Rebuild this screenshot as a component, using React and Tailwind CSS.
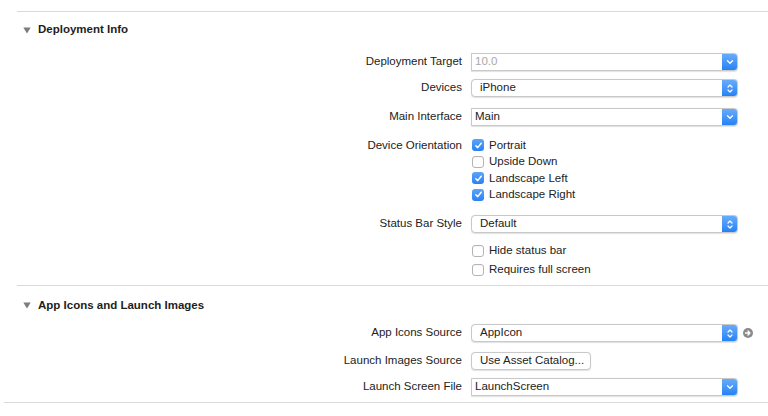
import React from "react";

const font = { fontFamily: '"Liberation Sans", Arial, sans-serif' };

function ChevDown() {
  return (
    <svg width="8" height="6" viewBox="0 0 8 6">
      <path d="M1.5 1.8 L4 4.2 L6.5 1.8" fill="none" stroke="white" strokeWidth="1.3" strokeLinecap="round" strokeLinejoin="round" />
    </svg>
  );
}

function ChevUpDown() {
  return (
    <svg width="8" height="11" viewBox="0 0 8 11">
      <path d="M2 4 L4 2 L6 4" fill="none" stroke="white" strokeWidth="1.2" strokeLinecap="round" strokeLinejoin="round" />
      <path d="M2 7 L4 9 L6 7" fill="none" stroke="white" strokeWidth="1.2" strokeLinecap="round" strokeLinejoin="round" />
    </svg>
  );
}

function Popup({ text, updown, combo, disabled }) {
  return (
    <div
      className={
        "w-[267px] h-[18px] flex bg-white overflow-hidden border border-[#c9c9c9] shadow-[0_0.5px_1px_rgba(0,0,0,0.12)] " +
        (combo ? "rounded-r-[4px]" : "rounded-[4px]")
      }
    >
      <div
        className={
          "flex-1 flex items-center text-[11.5px] leading-none " +
          (combo ? "pl-[3px] " : "pl-[8px] ") +
          (disabled ? "text-[#a8a8a8]" : "text-[#222]")
        }
      >
        {text}
      </div>
      <div className="w-[16px] -my-px -mr-px rounded-r-[4px] bg-linear-to-b from-[#6aaefa] to-[#1d7ff5] flex items-center justify-center">
        {updown ? <ChevUpDown /> : <ChevDown />}
      </div>
    </div>
  );
}

function Checkbox({ checked }) {
  if (checked) {
    return (
      <div className="w-[12px] h-[12px] rounded-[3px] bg-linear-to-b from-[#5aa5f8] to-[#2a80f3] flex items-center justify-center">
        <svg width="9" height="9" viewBox="0 0 9 9">
          <path d="M1.8 4.8 L3.7 6.6 L7.2 2.2" fill="none" stroke="white" strokeWidth="1.5" strokeLinecap="round" strokeLinejoin="round" />
        </svg>
      </div>
    );
  }
  return <div className="w-[12px] h-[12px] rounded-[3px] border border-[#b4b4b4] bg-white shadow-[inset_0_0.5px_1px_rgba(0,0,0,0.08)]" />;
}

function Row({ label, children, className = "" }) {
  return (
    <div className={"flex items-center " + className}>
      <div className="w-[463px] text-right text-[11.5px] leading-none text-[#222] pr-[1px]">{label}</div>
      <div className="ml-[8px] flex items-center">{children}</div>
    </div>
  );
}

function CheckRow({ label, checked, text, className = "h-[16.5px]" }) {
  return (
    <Row label={label} className={className}>
      <div className="ml-[1px] flex items-center gap-[5px]">
        <Checkbox checked={checked} />
        <span className="text-[11.5px] leading-none text-[#222]">{text}</span>
      </div>
    </Row>
  );
}

function Header({ title, className }) {
  return (
    <div className={"flex items-center " + className}>
      <svg className="ml-[23px]" width="8" height="7" viewBox="0 0 8 7">
        <path d="M0.3 0.6 L7.7 0.6 L4 6.6 Z" fill="#7d7d7d" />
      </svg>
      <span className="ml-[7px] text-[11.5px] font-bold leading-none text-[#1e1e1e]">{title}</span>
    </div>
  );
}

export default function App() {
  return (
    <div className="w-[768px] h-[416px] bg-white overflow-hidden" style={font}>
      <div className="pt-[11px]">
        <div className="ml-[17px] h-px bg-[#d9d9d9]" />
        <Header title="Deployment Info" className="h-[34px] pt-[2px]" />
        <div className="flex flex-col">
          <Row label="Deployment Target" className="mt-[7px] h-[18px]">
            <Popup text="10.0" combo disabled />
          </Row>
          <Row label="Devices" className="mt-[8px] h-[18px]">
            <Popup text="iPhone" updown />
          </Row>
          <Row label="Main Interface" className="mt-[11px] h-[18px]">
            <Popup text="Main" combo />
          </Row>
          <CheckRow label="Device Orientation" checked text="Portrait" className="mt-[11px] h-[16.5px]" />
          <CheckRow label="" text="Upside Down" />
          <CheckRow label="" checked text="Landscape Left" />
          <CheckRow label="" checked text="Landscape Right" />
          <Row label="Status Bar Style" className="mt-[12px] h-[18px]">
            <Popup text="Default" updown />
          </Row>
          <CheckRow label="" text="Hide status bar" className="mt-[9px] h-[17px]" />
          <CheckRow label="" text="Requires full screen" className="mt-[2px] h-[17px]" />
        </div>
        <div className="ml-[17px] mt-[7px] h-px bg-[#d9d9d9]" />
        <Header title="App Icons and Launch Images" className="h-[37px] pt-[2px]" />
        <div className="flex flex-col">
          <Row label="App Icons Source" className="mt-[1px] h-[18px]">
            <Popup text="AppIcon" updown />
            <svg className="ml-[5px]" width="10" height="10" viewBox="0 0 10 10">
              <circle cx="5" cy="5" r="5" fill="#8a8a8a" />
              <path d="M2.5 5 H7 M5 3 L7 5 L5 7" fill="none" stroke="white" strokeWidth="1.3" strokeLinecap="round" strokeLinejoin="round" />
            </svg>
          </Row>
          <Row label="Launch Images Source" className="mt-[10px] h-[18px]">
            <div className="w-[120px] h-[18px] rounded-[4px] border border-[#c9c9c9] bg-white shadow-[0_0.5px_1px_rgba(0,0,0,0.12)] flex items-center pl-[8px] text-[11.5px] leading-none text-[#222]">
              Use Asset Catalog...
            </div>
          </Row>
          <Row label="Launch Screen File" className="mt-[8px] h-[18px]">
            <Popup text="LaunchScreen" combo />
          </Row>
        </div>
        <div className="ml-[4px] mt-[6px] h-px bg-[#d9d9d9]" />
      </div>
    </div>
  );
}
